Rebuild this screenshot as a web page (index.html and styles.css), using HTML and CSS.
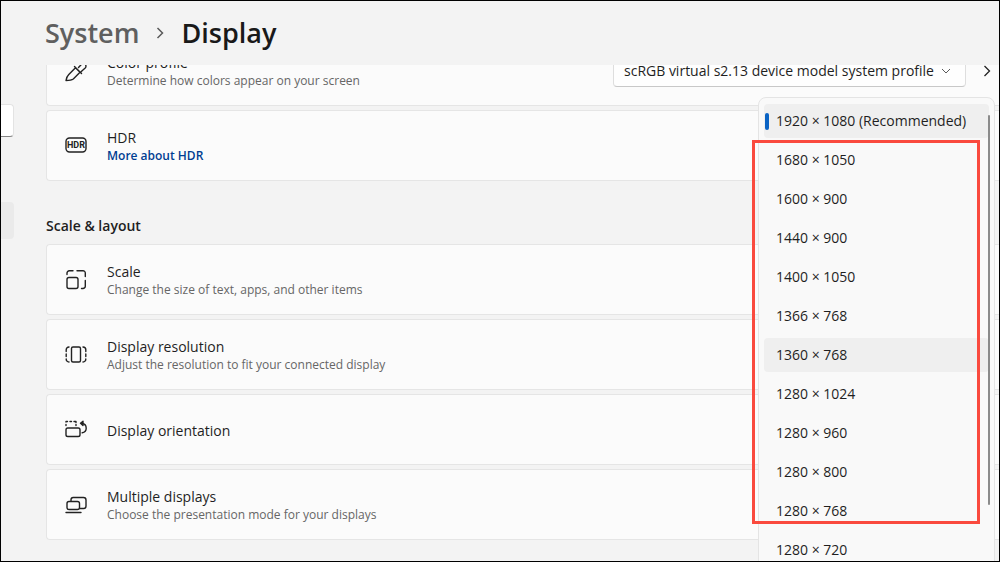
FILE: index.html
```html
<!DOCTYPE html>
<html lang="en">
<head>
<meta charset="utf-8">
<title>System - Display</title>
<link rel="stylesheet" href="styles.css">
</head>
<body>
<div class="window">
  <aside class="sidebar">
    <input class="search" type="text" aria-label="Find a setting">
    <button class="nav-current" type="button" aria-label="System"></button>
  </aside>
  <main class="main">
    <nav class="breadcrumb" aria-label="Breadcrumb">
      <a class="crumb" href="#">System</a>
      <svg class="crumb-arrow" viewBox="0 0 8 14"><path d="M1.5 2 6.500 7 1.500 12"/></svg>
      <h1 class="crumb-current">Display</h1>
    </nav>
    <div class="content">
      <section class="cards cards-top">
        <div class="card card-profile">
          <svg class="icon" viewBox="0 0 24 24"><path d="M2 21.500c.3-2.500 1.300-4.500 2.800-6L11.500 8.800l4.500 4.500-6.700 6.700C7.500 21.300 4.500 21.500 2 21.500zM10.500 7.500l7 7M14.500 8.500l3-3.200a2.600 2.600 0 0 1 3.700 3.700L17.300 12.500"/></svg>
          <div class="label"><label class="name" for="profile">Color profile</label><span class="hint">Determine how colors appear on your screen</span></div>
          <div class="combo">
            <select id="profile" class="select"><option>scRGB virtual s2.13 device model system profile</option></select>
            <svg class="combo-arrow" viewBox="0 0 10 6"><path d="M1 1l4 4 4-4"/></svg>
          </div>
          <button class="expand" type="button" aria-label="Color profile details"><svg class="expand-arrow" viewBox="0 0 8 12"><path d="M1.500 1 6.500 6l-5 5"/></svg></button>
        </div>
        <div class="card">
          <svg class="icon" viewBox="0 0 24 24"><rect x="2" y="4" width="20" height="14" rx="3.500"/><text class="icon-text" x="12" y="14.300" text-anchor="middle">HDR</text></svg>
          <div class="label"><span class="name">HDR</span><a class="link" href="#">More about HDR</a></div>
        </div>
      </section>
      <h2 class="heading">Scale &amp; layout</h2>
      <section class="cards">
        <div class="card">
          <svg class="icon" viewBox="0 0 24 24"><rect x="3" y="9.500" width="11" height="11" rx="2"/><path d="M3 6.500V5A2.300 2.300 0 0 1 5.300 2.700H9M13 2.700h6a2.300 2.300 0 0 1 2.300 2.300v3.500M21.300 12.500v5.700a2.300 2.300 0 0 1-2.300 2.300H17.500"/></svg>
          <div class="label"><span class="name">Scale</span><span class="hint">Change the size of text, apps, and other items</span></div>
        </div>
        <div class="card">
          <svg class="icon" viewBox="0 0 24 24"><rect x="7.500" y="4" width="9" height="15" rx="1.500"/><path d="M5 4a2.800 2.800 0 0 0-2.800 2.800V8.500M2.200 11v2.500M2.200 16A2.800 2.800 0 0 0 5 19M19 4a2.800 2.800 0 0 1 2.800 2.800V8.500M21.800 11v2.500M21.800 16a2.800 2.800 0 0 1-2.800 3"/></svg>
          <div class="label"><span class="name">Display resolution</span><span class="hint">Adjust the resolution to fit your connected display</span></div>
        </div>
        <div class="card">
          <svg class="icon" viewBox="0 0 24 24"><rect x="2" y="10" width="14" height="8.500" rx="1.800"/><path d="M2 7.500V6.500M2 4V3.500h1.500M6 3.500h1.500M10 3.500h2v1M12 6.500v1"/><path d="M18 5.500c2.500.2 4.200 2 4.200 4.700 0 2.400-1.700 4.100-4 4.600"/><path class="icon-fill" d="M16.500 5.300 19 3.300v4.300z"/></svg>
          <div class="label"><span class="name">Display orientation</span></div>
        </div>
        <div class="card">
          <svg class="icon" viewBox="0 0 24 24"><rect x="3" y="8.500" width="12.500" height="8" rx="2"/><path d="M7 8V6.700A2.200 2.200 0 0 1 9.200 4.500h10.300A2.500 2.500 0 0 1 22 7v6a2.500 2.500 0 0 1-2.500 2.500H16M2 19.500h15"/></svg>
          <div class="label"><span class="name">Multiple displays</span><span class="hint">Choose the presentation mode for your displays</span></div>
        </div>
      </section>
    </div>
  </main>
  <div class="popup" role="listbox" aria-label="Display resolution">
    <button class="option option-selected" role="option" aria-selected="true" type="button">1920 × 1080 (Recommended)</button>
    <button class="option" role="option" type="button">1680 × 1050</button>
    <button class="option" role="option" type="button">1600 × 900</button>
    <button class="option" role="option" type="button">1440 × 900</button>
    <button class="option" role="option" type="button">1400 × 1050</button>
    <button class="option" role="option" type="button">1366 × 768</button>
    <button class="option option-hover" role="option" type="button">1360 × 768</button>
    <button class="option" role="option" type="button">1280 × 1024</button>
    <button class="option" role="option" type="button">1280 × 960</button>
    <button class="option" role="option" type="button">1280 × 800</button>
    <button class="option" role="option" type="button">1280 × 768</button>
    <button class="option" role="option" type="button">1280 × 720</button>
    <div class="scrollbar"></div>
  </div>
  <div class="highlight"></div>
</div>
</body>
</html>
```
FILE: styles.css
```css
* {
  box-sizing: border-box;
}

body {
  margin: 0;
  font-family: "Open Sans", "Noto Sans", sans-serif;
  font-size: 14px;
  line-height: 18px;
  color: #1f1f1f;
}

button,
input,
select {
  font: inherit;
  color: inherit;
}

.window {
  position: relative;
  display: flex;
  height: 100vh;
  overflow: hidden;
  background: #f3f3f3;
  border: 1px solid #000;
}

.sidebar {
  display: flex;
  flex-direction: column;
  gap: 65px;
  flex: none;
  width: 13px;
  padding-top: 103px;
}

.search {
  width: 100%;
  height: 33px;
  padding: 0;
  border: 1px solid #e3e3e3;
  border-left: 0;
  border-bottom-color: #858585;
  border-radius: 0 4px 4px 0;
  background: #fff;
}

.nav-current {
  width: 100%;
  height: 37px;
  padding: 0;
  border: 0;
  border-radius: 0 4px 4px 0;
  background: #eaeaea;
}

.main {
  display: flex;
  flex-direction: column;
  flex: 1;
  min-width: 0;
  padding-left: 31px;
}

.breadcrumb {
  display: flex;
  flex: none;
  align-items: center;
  gap: 17px;
  height: 64px;
  font-size: 27px;
  font-weight: 600;
  line-height: 36px;
}

.crumb {
  color: #5f5f5f;
  text-decoration: none;
}

.crumb-current {
  margin: 0;
  font: inherit;
  color: #191919;
}

.crumb-arrow,
.combo-arrow,
.expand-arrow {
  fill: none;
  stroke: #5a5a5a;
}

.crumb-arrow {
  width: 8px;
  height: 14px;
  stroke-width: 1.5;
}

.content {
  flex: 1;
  min-height: 0;
  padding-left: 1px;
  overflow: hidden;
}

.cards {
  display: flex;
  flex-direction: column;
  gap: 4px;
}

.cards-top {
  margin-top: -30px;
}

.card {
  display: flex;
  align-items: center;
  gap: 17px;
  min-height: 71px;
  padding-left: 17px;
  background: #fbfbfb;
  border: 1px solid #e5e5e5;
  border-right: 0;
  border-radius: 4px 0 0 4px;
}

.icon {
  flex: none;
  width: 24px;
  height: 24px;
  margin-right: 2px;
  fill: none;
  stroke: #222;
  stroke-width: 1.4;
  stroke-linecap: round;
  stroke-linejoin: round;
}

.icon-fill {
  fill: #222;
}

.icon-text {
  fill: #222;
  stroke: none;
  font-family: "Roboto", sans-serif;
  font-size: 9px;
  font-weight: 700;
}

.label {
  display: flex;
  flex-direction: column;
  flex: 1;
  padding-top: 3px;
}

.hint,
.link {
  font-size: 12px;
  line-height: 18px;
}

.hint {
  color: #666;
}

.link {
  color: #003e92;
  font-weight: 600;
  text-decoration: none;
}

.heading {
  margin: 36px 0 9px;
  font-size: 14px;
  font-weight: 600;
  line-height: 18px;
}

.combo {
  display: flex;
  align-items: center;
}

.select {
  appearance: none;
  width: 353px;
  height: 32px;
  padding: 0 26px 0 10px;
  border: 1px solid #dedede;
  border-bottom-color: #c8c8c8;
  border-radius: 4px;
  background: #fefefe;
}

.combo-arrow {
  width: 10px;
  height: 6px;
  margin-left: -25px;
  margin-right: 15px;
  pointer-events: none;
}

.expand {
  display: flex;
  padding: 0 8px 0 0;
  border: 0;
  background: none;
}

.expand-arrow {
  width: 8px;
  height: 12px;
  stroke: #222;
  stroke-width: 1.3;
}

.popup {
  position: absolute;
  top: 96px;
  right: 4px;
  bottom: -20px;
  display: flex;
  flex-direction: column;
  gap: 5px;
  width: 237px;
  padding: 6px 5px;
  overflow: hidden;
  background: #f9f9f9;
  border: 1px solid #e4e4e4;
  border-radius: 8px;
}

.option {
  flex: none;
  height: 34px;
  padding: 0 12px;
  border: 0;
  border-radius: 4px;
  background: none;
  text-align: left;
}

.option-selected,
.option-hover {
  background: #efefef;
}

.option-selected::before {
  content: "";
  position: absolute;
  top: 15px;
  left: 6px;
  width: 4px;
  height: 17px;
  border-radius: 2px;
  background: #0a63c4;
}

.scrollbar {
  position: absolute;
  top: 17px;
  right: 4px;
  width: 2px;
  height: 390px;
  border-radius: 1px;
  background: #8b8b8b;
}

.highlight {
  position: absolute;
  top: 139px;
  right: 19px;
  width: 228px;
  height: 384px;
  border: 3px solid #fa4a3e;
}
```
